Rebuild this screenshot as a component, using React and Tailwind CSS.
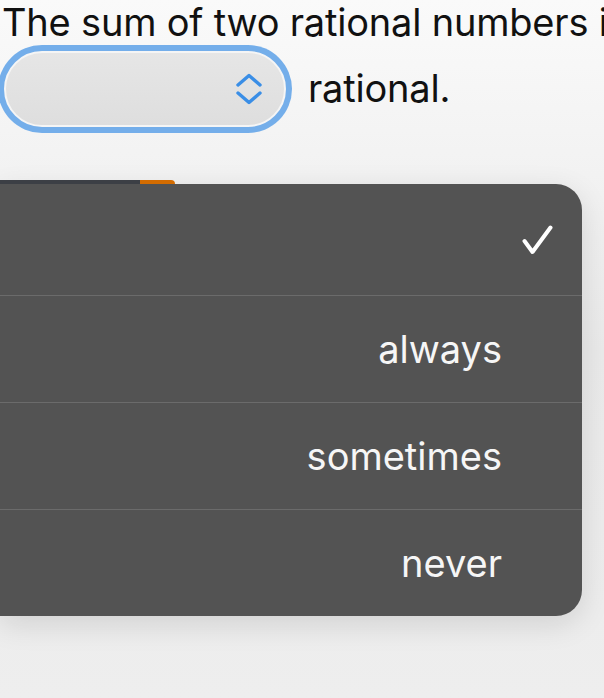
import React from 'react'

const options = ['always', 'sometimes', 'never']

function Chevrons() {
  return (
    <svg width="28" height="32" viewBox="0 0 28 32" fill="none">
      <path d="M3 12 L14 2.5 L25 12" stroke="#3a8ee6" strokeWidth="3.4" strokeLinecap="round" strokeLinejoin="round" />
      <path d="M3 20 L14 29.5 L25 20" stroke="#3a8ee6" strokeWidth="3.4" strokeLinecap="round" strokeLinejoin="round" />
    </svg>
  )
}

function Check() {
  return (
    <svg width="31" height="30" viewBox="0 0 31 30" fill="none">
      <path d="M2.5 16 L10.5 27 L28.5 2.5" stroke="#ffffff" strokeWidth="4" strokeLinecap="round" strokeLinejoin="round" />
    </svg>
  )
}

export default function App() {
  return (
    <div
      className="w-[604px] h-[698px] overflow-hidden bg-linear-to-b from-[#fafafa] via-[#eaeaea] to-[#eeeeee]"
      style={{ fontFamily: 'Inter, "Liberation Sans", Arial, sans-serif' }}
    >
      {/* Question text */}
      <p className="pt-[3px] pl-[2px] text-[38px] leading-none tracking-[-0.2px] text-[#111] whitespace-nowrap">
        The sum of two rational numbers is
      </p>

      {/* Select + trailing text */}
      <div className="mt-[4px] flex items-center">
        <div className="ml-[-2px] w-[294px] h-[88px] rounded-full bg-[#74aeea] p-[6px]">
          <div className="h-full rounded-full border-2 border-[#f5f5f5] bg-linear-to-b from-[#e6e6e6] to-[#dedede] flex items-center justify-end pr-[21px]">
            <Chevrons />
          </div>
        </div>
        <span className="ml-[16px] mb-[3px] text-[38px] leading-none tracking-[-0.2px] text-[#111]">rational.</span>
      </div>

      {/* Element peeking behind the menu */}
      <div className="mt-[47px] h-[4px] flex">
        <div className="w-[140px] bg-[#3c3f45]" />
        <div className="w-[35px] bg-[#d46c00] rounded-tr-[4px]" />
      </div>

      {/* Dropdown menu */}
      <div className="w-[582px] rounded-r-[26px] bg-[#535353] text-[#f6f6f6] shadow-[0_8px_30px_rgba(0,0,0,0.12)]">
        <div className="h-[111px] flex items-center justify-end">
          <div className="w-[80px] pl-[20px] flex items-center">
            <Check />
          </div>
        </div>
        {options.map((opt) => (
          <div key={opt} className="h-[107px] border-t border-[#6b6b6b] flex items-center justify-end">
            <span className="text-[38px] leading-none">{opt}</span>
            <div className="w-[80px]" />
          </div>
        ))}
      </div>
    </div>
  )
}
